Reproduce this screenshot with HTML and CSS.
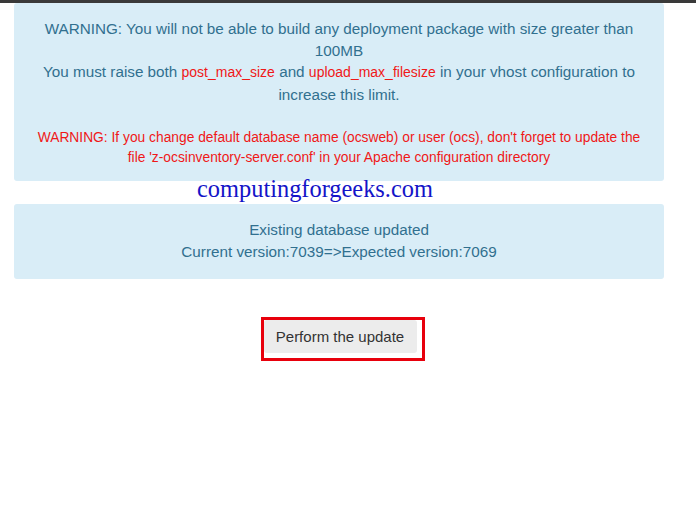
FILE: index.html
```html
<!DOCTYPE html>
<html>
<head>
<meta charset="utf-8">
<link rel="stylesheet" href="styles.css">
</head>
<body>
<div class="topbar"></div>
<div class="page">
  <div class="alert alert-warn">
    <p class="info">WARNING: You will not be able to build any deployment package with size greater than 100MB<br>You must raise both <span class="red">post_max_size</span> and <span class="red">upload_max_filesize</span> in your vhost configuration to increase this limit.</p>
    <p class="danger">WARNING: If you change default database name (ocsweb) or user (ocs), don't forget to update the file 'z-ocsinventory-server.conf' in your Apache configuration directory</p>
  </div>
  <div class="alert alert-db">
    <p class="info">Existing database updated<br>Current version:7039=&gt;Expected version:7069</p>
  </div>
  <div class="actions">
    <div class="highlight">
      <button class="btn" type="button">Perform the update</button>
    </div>
  </div>
  <div class="watermark">computingforgeeks.com</div>
</div>
</body>
</html>
```

FILE: styles.css
```css
html, body {
  margin: 0;
  padding: 0;
  background: #ffffff;
}
body {
  font-family: "Liberation Sans", Arial, sans-serif;
}
.topbar {
  height: 3px;
  background: #3a3a3a;
}
.page {
  position: relative;
  width: 650px;
  margin-left: 14px;
}
.alert {
  background: #d9edf7;
  border-radius: 3px;
  padding: 15px 20px;
  text-align: center;
  color: #31708f;
}
.alert-warn {
  height: 148px;
}
.alert-db {
  margin-top: 23px;
  padding-top: 15px;
  padding-bottom: 17px;
}
.alert p {
  margin: 0;
}
.info {
  font-size: 15.25px;
  line-height: 21.5px;
}
.red {
  color: #f01818;
  font-size: 14px;
}
.danger {
  color: #f01818;
  font-size: 13.8px;
  line-height: 20px;
  margin-top: 23px !important;
}
.actions {
  display: flex;
  justify-content: center;
  margin-top: 38px;
}
.highlight {
  border: 3px solid #e8000c;
  padding: 0 5px 5px 0;
  margin-left: 8px;
}
.btn {
  display: block;
  font-family: "Liberation Sans", Arial, sans-serif;
  font-size: 15px;
  color: #333333;
  background: #ececec;
  border: none;
  border-radius: 3px;
  padding: 0 13px 0 12px;
  height: 33px;
  line-height: 33px;
  margin: 0;
}
.watermark {
  position: absolute;
  left: 183px;
  top: 174px;
  font-family: "Liberation Serif", "Times New Roman", serif;
  font-size: 24.4px;
  line-height: 24px;
  color: #1414c8;
  white-space: nowrap;
}
```
